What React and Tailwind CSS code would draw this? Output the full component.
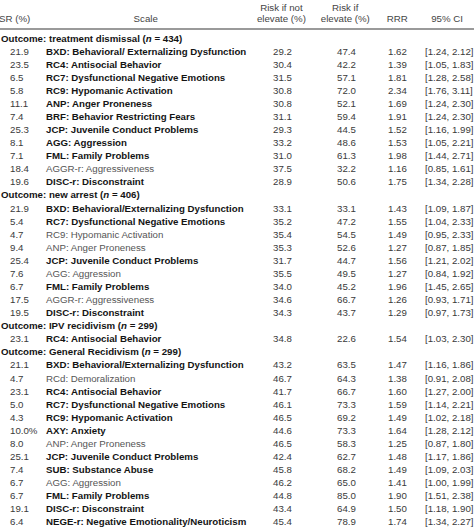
const groups = [
  {
    title: 'treatment dismissal',
    n: 434,
    rows: [
      ['21.9', 'BXD: Behavioral/ Externalizing Dysfunction', true, '29.2', '47.4', '1.62', '[1.24, 2.12]'],
      ['23.5', 'RC4: Antisocial Behavior', true, '30.4', '42.2', '1.39', '[1.05, 1.83]'],
      ['6.5', 'RC7: Dysfunctional Negative Emotions', true, '31.5', '57.1', '1.81', '[1.28, 2.58]'],
      ['5.8', 'RC9: Hypomanic Activation', true, '30.8', '72.0', '2.34', '[1.76, 3.11]'],
      ['11.1', 'ANP: Anger Proneness', true, '30.8', '52.1', '1.69', '[1.24, 2.30]'],
      ['7.4', 'BRF: Behavior Restricting Fears', true, '31.1', '59.4', '1.91', '[1.24, 2.30]'],
      ['25.3', 'JCP: Juvenile Conduct Problems', true, '29.3', '44.5', '1.52', '[1.16, 1.99]'],
      ['8.1', 'AGG: Aggression', true, '33.2', '48.6', '1.53', '[1.05, 2.21]'],
      ['7.1', 'FML: Family Problems', true, '31.0', '61.3', '1.98', '[1.44, 2.71]'],
      ['18.4', 'AGGR-r: Aggressiveness', false, '37.5', '32.2', '1.16', '[0.85, 1.61]'],
      ['19.6', 'DISC-r: Disconstraint', true, '28.9', '50.6', '1.75', '[1.34, 2.28]'],
    ],
  },
  {
    title: 'new arrest',
    n: 406,
    rows: [
      ['21.9', 'BXD: Behavioral/Externalizing Dysfunction', true, '33.1', '33.1', '1.43', '[1.09, 1.87]'],
      ['5.4', 'RC7: Dysfunctional Negative Emotions', true, '35.2', '47.2', '1.55', '[1.04, 2.33]'],
      ['4.7', 'RC9: Hypomanic Activation', false, '35.4', '54.5', '1.49', '[0.95, 2.33]'],
      ['9.4', 'ANP: Anger Proneness', false, '35.3', '52.6', '1.27', '[0.87, 1.85]'],
      ['25.4', 'JCP: Juvenile Conduct Problems', true, '31.7', '44.7', '1.56', '[1.21, 2.02]'],
      ['7.6', 'AGG: Aggression', false, '35.5', '49.5', '1.27', '[0.84, 1.92]'],
      ['6.7', 'FML: Family Problems', true, '34.0', '45.2', '1.96', '[1.45, 2.65]'],
      ['17.5', 'AGGR-r: Aggressiveness', false, '34.6', '66.7', '1.26', '[0.93, 1.71]'],
      ['19.5', 'DISC-r: Disconstraint', true, '34.3', '43.7', '1.29', '[0.97, 1.73]'],
    ],
  },
  {
    title: 'IPV recidivism',
    n: 299,
    rows: [['23.1', 'RC4: Antisocial Behavior', true, '34.8', '22.6', '1.54', '[1.03, 2.30]']],
  },
  {
    title: 'General Recidivism',
    n: 299,
    rows: [
      ['21.1', 'BXD: Behavioral/Externalizing Dysfunction', true, '43.2', '63.5', '1.47', '[1.16, 1.86]'],
      ['4.7', 'RCd: Demoralization', false, '46.7', '64.3', '1.38', '[0.91, 2.08]'],
      ['23.1', 'RC4: Antisocial Behavior', true, '41.7', '66.7', '1.60', '[1.27, 2.00]'],
      ['5.0', 'RC7: Dysfunctional Negative Emotions', true, '46.1', '73.3', '1.59', '[1.14, 2.21]'],
      ['4.3', 'RC9: Hypomanic Activation', true, '46.5', '69.2', '1.49', '[1.02, 2.18]'],
      ['10.0%', 'AXY: Anxiety', true, '44.6', '73.3', '1.64', '[1.28, 2.12]'],
      ['8.0', 'ANP: Anger Proneness', false, '46.5', '58.3', '1.25', '[0.87, 1.80]'],
      ['25.1', 'JCP: Juvenile Conduct Problems', true, '42.4', '62.7', '1.48', '[1.17, 1.86]'],
      ['7.4', 'SUB: Substance Abuse', true, '45.8', '68.2', '1.49', '[1.09, 2.03]'],
      ['6.7', 'AGG: Aggression', false, '46.2', '65.0', '1.41', '[1.00, 1.99]'],
      ['6.7', 'FML: Family Problems', true, '44.8', '85.0', '1.90', '[1.51, 2.38]'],
      ['19.1', 'DISC-r: Disconstraint', true, '43.4', '64.9', '1.50', '[1.18, 1.90]'],
      ['6.4', 'NEGE-r: Negative Emotionality/Neuroticism', true, '45.4', '78.9', '1.74', '[1.34, 2.27]'],
    ],
  },
]

const rowClass = 'grid grid-cols-[46px_227px_64px_51px_37px_1fr] h-[13.08px] leading-[13.08px] whitespace-nowrap'

const DataRow = ({ row }) => {
  const [sr, scale, bold, notEl, el, rrr, ci] = row
  return (
    <div className={rowClass}>
      <span className="pl-[10px]">{sr}</span>
      <span className={bold ? 'font-bold text-[#141414]' : 'text-[#555]'}>{scale}</span>
      <span>{notEl}</span>
      <span>{el}</span>
      <span>{rrr}</span>
      <span>{ci}</span>
    </div>
  )
}

export default function App() {
  return (
    <div
      className="w-[474px] h-[532px] overflow-hidden bg-white text-[9.7px] text-[#3a3a3a]"
      style={{ fontFamily: '"Liberation Sans", Arial, sans-serif' }}
    >
      {/* шапка таблицы */}
      <div className="flex h-[28px] pt-[1.5px] leading-[11px] text-[#444] whitespace-nowrap">
        <div className="w-[46px] pt-[11px] -ml-[1px]">SR (%)</div>
        <div className="w-[202px] pt-[11px] text-center">Scale</div>
        <div className="w-[70px] text-center">
          <div>Risk if not</div>
          <div>elevate (%)</div>
        </div>
        <div className="w-[58px] text-center">
          <div>Risk if</div>
          <div>elevate (%)</div>
        </div>
        <div className="w-[46px] pt-[11px] text-center">RRR</div>
        <div className="w-[54px] pt-[11px] text-center">95% CI</div>
      </div>
      <div className="h-[2px] bg-[#9a9a9a] mb-[1.5px]" />

      {groups.map((g) => (
        <div key={g.title}>
          <div className="h-[13.08px] leading-[13.08px] pl-[1px] font-bold text-[#141414] whitespace-nowrap">
            Outcome: {g.title} (<i>n</i> = {g.n})
          </div>
          {g.rows.map((r, i) => (
            <DataRow key={i} row={r} />
          ))}
        </div>
      ))}
    </div>
  )
}
